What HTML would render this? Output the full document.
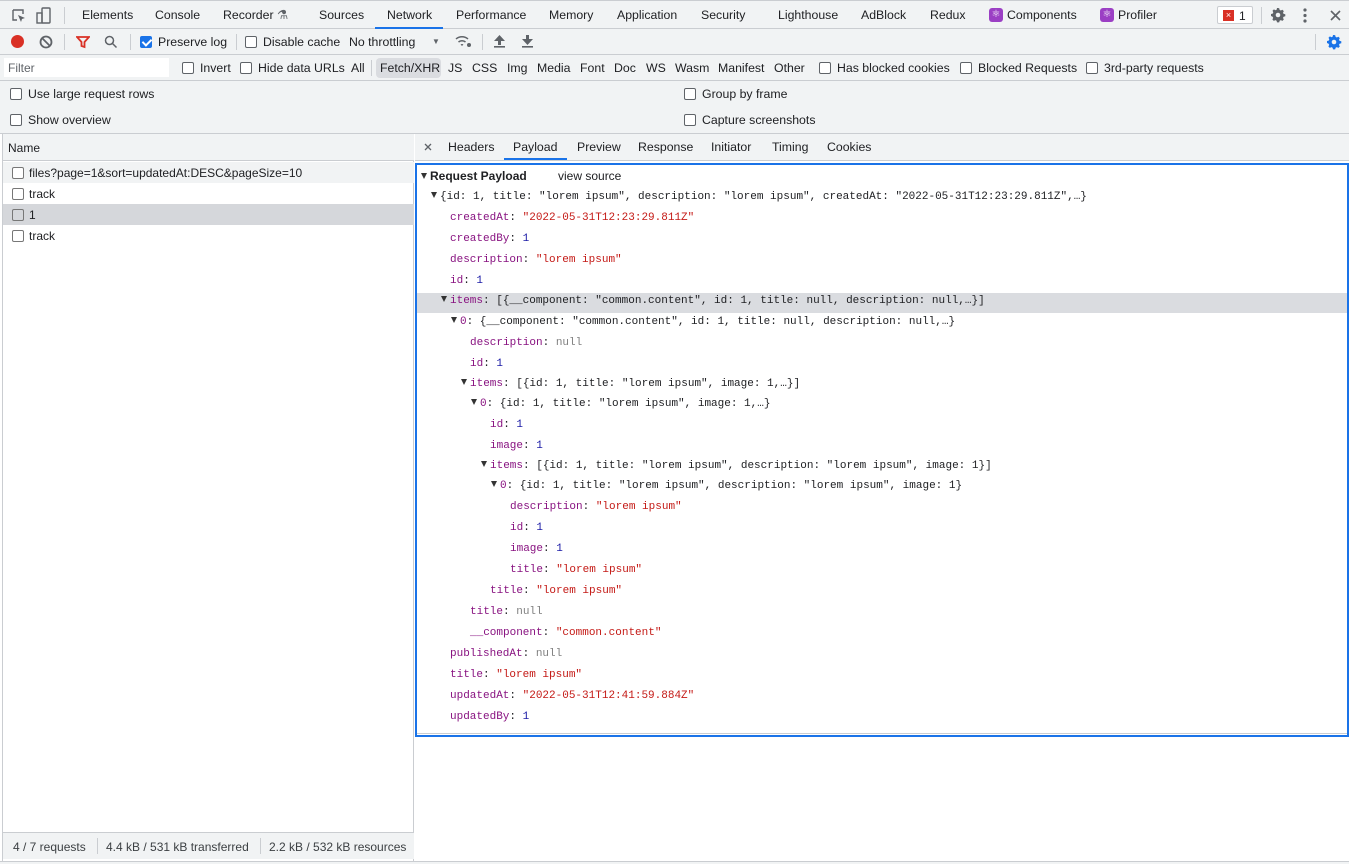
<!DOCTYPE html>
<html><head><meta charset="utf-8"><style>
*{box-sizing:border-box;margin:0;padding:0}
body{width:1349px;height:864px;overflow:hidden;background:#fff;font-family:"Liberation Sans",Arial,sans-serif;font-size:12px;color:#202124;position:relative}
.a{position:absolute;white-space:nowrap}
.bar{position:absolute;left:0;width:1349px;background:#f1f3f4;border-bottom:1px solid #cacdd1}
.cb{display:inline-block;width:12px;height:12px;border:1px solid #5f6368;border-radius:2px;vertical-align:top;background:#fff}
.cbc{background:#1a73e8;border-color:#1a73e8;position:relative}
.cbc:after{content:"";position:absolute;left:3px;top:0px;width:4px;height:7px;border:solid #fff;border-width:0 2px 2px 0;transform:rotate(45deg)}
.mono{font-family:"Liberation Mono",monospace;font-size:11px}
.k{color:#881280}.s{color:#c41a16}.n{color:#1a1aa6}.nl{color:#808080}
.tri{display:inline-block;width:0;height:0;border-left:3.5px solid transparent;border-right:3.5px solid transparent;border-top:6px solid #333;margin-right:3px;vertical-align:1px}
.sep{position:absolute;width:1px;background:#cacdd1}
.t{font-size:12.3px}
</style></head><body>
<svg width="0" height="0" style="position:absolute"><defs><g id="gear"><path d="M8 1l1.2.2.4 1.7 1.2.6 1.6-.8 1.4 1.4-.8 1.6.6 1.2 1.7.4v2l-1.7.4-.6 1.2.8 1.6-1.4 1.4-1.6-.8-1.2.6-.4 1.7H7l-.4-1.7-1.2-.6-1.6.8-1.4-1.4.8-1.6-.6-1.2L1 9V7l1.7-.4.6-1.2-.8-1.6 1.4-1.4 1.6.8 1.2-.6L7 1z"/></g></defs></svg>
<!-- top tab bar -->
<div class="bar" style="top:0;height:29px;border-top:1px solid #cacdd1">
<svg class="a" style="left:11px;top:7px" width="16" height="16" viewBox="0 0 16 16"><path d="M2 2h10v4M2 2v10h4" fill="none" stroke="#5f6368" stroke-width="1.4"/><path d="M7 7l7 3-3 1-1 3z" fill="#5f6368"/></svg>
<svg class="a" style="left:36px;top:6px" width="16" height="18" viewBox="0 0 16 18"><rect x="6" y="1" width="8" height="15" rx="1" fill="none" stroke="#5f6368" stroke-width="1.4"/><rect x="1" y="6" width="5" height="10" fill="none" stroke="#5f6368" stroke-width="1.4"/></svg>
<div class="sep" style="left:64px;top:6px;height:17px"></div>
<span class="a t" style="left:82px;top:7px">Elements</span>
<span class="a t" style="left:155px;top:7px">Console</span>
<span class="a t" style="left:223px;top:7px">Recorder <span style="color:#5f6368">⚗</span></span>
<span class="a t" style="left:319px;top:7px">Sources</span>
<span class="a t" style="left:387px;top:7px">Network</span>
<div class="a" style="left:375px;top:26px;width:68px;height:2px;background:#1a73e8"></div>
<span class="a t" style="left:456px;top:7px">Performance</span>
<span class="a t" style="left:549px;top:7px">Memory</span>
<span class="a t" style="left:617px;top:7px">Application</span>
<span class="a t" style="left:701px;top:7px">Security</span>
<span class="a t" style="left:778px;top:7px">Lighthouse</span>
<span class="a t" style="left:861px;top:7px">AdBlock</span>
<span class="a t" style="left:930px;top:7px">Redux</span>
<span class="a" style="left:989px;top:7px;width:14px;height:14px;background:#9b3fc4;border-radius:3px;color:#fff;font-size:10px;text-align:center;line-height:14px">⚛</span>
<span class="a t" style="left:1007px;top:7px">Components</span>
<span class="a" style="left:1100px;top:7px;width:14px;height:14px;background:#9b3fc4;border-radius:3px;color:#fff;font-size:10px;text-align:center;line-height:14px">⚛</span>
<span class="a t" style="left:1118px;top:7px">Profiler</span>
<div class="a" style="left:1217px;top:5px;width:36px;height:18px;border:1px solid #cacdd1;border-radius:2px;background:#fff"><span class="a" style="left:5px;top:3px;width:11px;height:11px;background:#d93025;color:#fff;font-size:9px;line-height:11px;text-align:center">×</span><span class="a" style="left:21px;top:2px">1</span></div>
<div class="sep" style="left:1261px;top:6px;height:17px"></div>
<svg class="a" style="left:1270px;top:6px" width="16" height="16" viewBox="0 0 16 16" fill="#5f6368"><use href="#gear"/><circle cx="8" cy="8" r="2.3" fill="#f1f3f4"/></svg>
<svg class="a" style="left:1303px;top:7px" width="4" height="15" viewBox="0 0 4 15" fill="#5f6368"><circle cx="2" cy="2" r="1.6"/><circle cx="2" cy="7.5" r="1.6"/><circle cx="2" cy="13" r="1.6"/></svg>
<svg class="a" style="left:1330px;top:9px" width="11" height="11" viewBox="0 0 11 11"><path d="M1 1l9 9M10 1l-9 9" stroke="#5f6368" stroke-width="1.6"/></svg>
</div>
<!-- toolbar -->
<div class="bar" style="top:29px;height:26px">
<span class="a" style="left:11px;top:6px;width:13px;height:13px;border-radius:50%;background:#d93025"></span>
<svg class="a" style="left:39px;top:6px" width="14" height="14" viewBox="0 0 14 14"><circle cx="7" cy="7" r="5.5" fill="none" stroke="#5f6368" stroke-width="1.8"/><path d="M3 3l8 8" stroke="#5f6368" stroke-width="1.8"/></svg>
<div class="sep" style="left:64px;top:5px;height:16px"></div>
<svg class="a" style="left:76px;top:6px" width="14" height="14" viewBox="0 0 14 14"><path d="M1 2h12l-4.5 5v5l-3-1V7z" fill="none" stroke="#d93025" stroke-width="1.8"/></svg>
<svg class="a" style="left:104px;top:6px" width="14" height="14" viewBox="0 0 14 14"><circle cx="5.5" cy="5.5" r="4" fill="none" stroke="#5f6368" stroke-width="1.5"/><path d="M8.5 8.5l4 4" stroke="#5f6368" stroke-width="1.5"/></svg>
<div class="sep" style="left:130px;top:5px;height:16px"></div>
<span class="a" style="left:140px;top:7px"><span class="cb cbc"></span></span>
<span class="a t" style="left:158px;top:6px">Preserve log</span>
<div class="sep" style="left:236px;top:5px;height:16px"></div>
<span class="a" style="left:245px;top:7px"><span class="cb"></span></span>
<span class="a t" style="left:263px;top:6px">Disable cache</span>
<span class="a t" style="left:349px;top:6px">No throttling</span>
<span class="a" style="left:432px;top:8px;font-size:8px;color:#5f6368">▼</span>
<svg class="a" style="left:455px;top:6px" width="18" height="14" viewBox="0 0 18 14" fill="none" stroke="#5f6368" stroke-width="1.5"><path d="M1 4a9 9 0 0 1 12 0M3.5 7a5.5 5.5 0 0 1 7 0M6 10a2 2 0 0 1 2 0"/><circle cx="14" cy="10" r="2" fill="#5f6368" stroke="none"/></svg>
<div class="sep" style="left:482px;top:5px;height:16px"></div>
<svg class="a" style="left:494px;top:6px" width="11" height="13" viewBox="0 0 11 13" fill="#5f6368"><path d="M5.5 0L11 6H7v4H4V6H0z"/><rect x="0" y="11" width="11" height="1.6"/></svg>
<svg class="a" style="left:522px;top:6px" width="11" height="13" viewBox="0 0 11 13" fill="#5f6368"><path d="M5.5 10L11 4H7V0H4v4H0z"/><rect x="0" y="11" width="11" height="1.6"/></svg>
<div class="sep" style="left:1315px;top:5px;height:16px"></div>
<svg class="a" style="left:1326px;top:5px" width="16" height="16" viewBox="0 0 16 16" fill="#1a73e8"><use href="#gear"/><circle cx="8" cy="8" r="2.3" fill="#f1f3f4"/></svg>
</div>
<!-- filter row -->
<div class="bar" style="top:55px;height:26px">
<div class="a" style="left:4px;top:3px;width:165px;height:19px;background:#fff"><span class="a" style="left:4px;top:3px;color:#5f6368">Filter</span></div>
<span class="a" style="left:182px;top:7px"><span class="cb"></span></span><span class="a t" style="left:200px;top:6px">Invert</span>
<span class="a" style="left:240px;top:7px"><span class="cb"></span></span><span class="a t" style="left:258px;top:6px">Hide data URLs</span>
<span class="a t" style="left:351px;top:6px">All</span>
<div class="sep" style="left:371px;top:5px;height:16px"></div>
<div class="a" style="left:376px;top:3px;width:65px;height:20px;background:#dadce0;border-radius:4px"></div>
<span class="a t" style="left:380px;top:6px">Fetch/XHR</span>
<span class="a t" style="left:448px;top:6px">JS</span>
<span class="a t" style="left:472px;top:6px">CSS</span>
<span class="a t" style="left:507px;top:6px">Img</span>
<span class="a t" style="left:537px;top:6px">Media</span>
<span class="a t" style="left:580px;top:6px">Font</span>
<span class="a t" style="left:614px;top:6px">Doc</span>
<span class="a t" style="left:646px;top:6px">WS</span>
<span class="a t" style="left:675px;top:6px">Wasm</span>
<span class="a t" style="left:718px;top:6px">Manifest</span>
<span class="a t" style="left:774px;top:6px">Other</span>
<span class="a" style="left:819px;top:7px"><span class="cb"></span></span><span class="a t" style="left:837px;top:6px">Has blocked cookies</span>
<span class="a" style="left:960px;top:7px"><span class="cb"></span></span><span class="a t" style="left:978px;top:6px">Blocked Requests</span>
<span class="a" style="left:1086px;top:7px"><span class="cb"></span></span><span class="a t" style="left:1104px;top:6px">3rd-party requests</span>
</div>
<!-- settings rows -->
<div class="bar" style="top:81px;height:53px">
<span class="a" style="left:10px;top:7px"><span class="cb"></span></span><span class="a t" style="left:28px;top:6px">Use large request rows</span>
<span class="a" style="left:10px;top:33px"><span class="cb"></span></span><span class="a t" style="left:28px;top:32px">Show overview</span>
<span class="a" style="left:684px;top:7px"><span class="cb"></span></span><span class="a t" style="left:702px;top:6px">Group by frame</span>
<span class="a" style="left:684px;top:33px"><span class="cb"></span></span><span class="a t" style="left:702px;top:32px">Capture screenshots</span>
</div>
<!-- left panel -->
<div class="a" style="left:2px;top:134px;width:412px;height:727px;border-left:1px solid #cacdd1;border-right:1px solid #cacdd1;background:#fff">
<div class="a" style="left:0;top:0;width:411px;height:27px;background:#f1f3f4;border-bottom:1px solid #cacdd1"><span class="a" style="left:5px;top:7px">Name</span></div>
<div class="a" style="left:0;top:28px;width:411px;height:21px;background:#f1f3f4"></div>
<div class="a" style="left:0;top:70px;width:411px;height:21px;background:#d5d7db"></div>
<span class="a" style="left:9px;top:33px"><span class="cb" style="border-color:#777"></span></span><span class="a" style="left:26px;top:32px">files?page=1&amp;sort=updatedAt:DESC&amp;pageSize=10</span>
<span class="a" style="left:9px;top:54px"><span class="cb" style="border-color:#777"></span></span><span class="a" style="left:26px;top:53px">track</span>
<span class="a" style="left:9px;top:75px"><span class="cb" style="border-color:#777;background:transparent"></span></span><span class="a" style="left:26px;top:74px">1</span>
<span class="a" style="left:9px;top:96px"><span class="cb" style="border-color:#777"></span></span><span class="a" style="left:26px;top:95px">track</span>
<div class="a" style="left:0;top:698px;width:411px;height:27px;background:#f1f3f4;border-top:1px solid #cacdd1">
<span class="a" style="left:10px;top:7px;color:#3c4043">4 / 7 requests</span>
<div class="sep" style="left:94px;top:5px;height:16px"></div>
<span class="a" style="left:103px;top:7px;color:#3c4043">4.4 kB / 531 kB transferred</span>
<div class="sep" style="left:257px;top:5px;height:16px"></div>
<span class="a" style="left:266px;top:7px;color:#3c4043">2.2 kB / 532 kB resources</span>
</div>
</div>
<div class="a" style="left:0;top:861px;width:1349px;height:3px;background:#f1f3f4;border-top:1px solid #cacdd1"></div>
<!-- right tabs -->
<div class="a" style="left:415px;top:134px;width:934px;height:27px;background:#f1f3f4;border-bottom:1px solid #cacdd1">
<svg class="a" style="left:9px;top:9px" width="8" height="8" viewBox="0 0 8 8"><path d="M1 1l6 6M7 1l-6 6" stroke="#5f6368" stroke-width="1.3"/></svg>
<span class="a t" style="left:33px;top:6px">Headers</span>
<span class="a t" style="left:98px;top:6px">Payload</span>
<div class="a" style="left:89px;top:24px;width:63px;height:2px;background:#1a73e8"></div>
<span class="a t" style="left:162px;top:6px">Preview</span>
<span class="a t" style="left:223px;top:6px">Response</span>
<span class="a t" style="left:296px;top:6px">Initiator</span>
<span class="a t" style="left:357px;top:6px">Timing</span>
<span class="a t" style="left:412px;top:6px">Cookies</span>
</div>
<!-- payload box -->
<div class="a" style="left:415px;top:163px;width:934px;height:574px;border:2px solid #1a73e8"></div>
<div class="a" style="left:417px;top:733px;width:930px;height:1px;background:#cacdd1"></div>
<div class="a" style="left:417px;top:293px;width:930px;height:20px;background:#dadce0"></div>
<span class="a" style="left:421px;top:169px;font-weight:bold"><span class="tri"></span>Request Payload</span>
<span class="a" style="left:558px;top:169px">view source</span>
<div class="mono">
<span class="a" style="left:431px;top:191px"><span class="tri"></span>{id: 1, title: "lorem ipsum", description: "lorem ipsum", createdAt: "2022-05-31T12:23:29.811Z",…}</span>
<span class="a" style="left:450px;top:212px"><span class="k">createdAt</span>: <span class="s">"2022-05-31T12:23:29.811Z"</span></span>
<span class="a" style="left:450px;top:233px"><span class="k">createdBy</span>: <span class="n">1</span></span>
<span class="a" style="left:450px;top:254px"><span class="k">description</span>: <span class="s">"lorem ipsum"</span></span>
<span class="a" style="left:450px;top:275px"><span class="k">id</span>: <span class="n">1</span></span>
<span class="a" style="left:441px;top:295px"><span class="tri"></span><span class="k">items</span>: [{__component: "common.content", id: 1, title: null, description: null,…}]</span>
<span class="a" style="left:451px;top:316px"><span class="tri"></span><span class="k">0</span>: {__component: "common.content", id: 1, title: null, description: null,…}</span>
<span class="a" style="left:470px;top:337px"><span class="k">description</span>: <span class="nl">null</span></span>
<span class="a" style="left:470px;top:358px"><span class="k">id</span>: <span class="n">1</span></span>
<span class="a" style="left:461px;top:378px"><span class="tri"></span><span class="k">items</span>: [{id: 1, title: "lorem ipsum", image: 1,…}]</span>
<span class="a" style="left:471px;top:398px"><span class="tri"></span><span class="k">0</span>: {id: 1, title: "lorem ipsum", image: 1,…}</span>
<span class="a" style="left:490px;top:419px"><span class="k">id</span>: <span class="n">1</span></span>
<span class="a" style="left:490px;top:440px"><span class="k">image</span>: <span class="n">1</span></span>
<span class="a" style="left:481px;top:460px"><span class="tri"></span><span class="k">items</span>: [{id: 1, title: "lorem ipsum", description: "lorem ipsum", image: 1}]</span>
<span class="a" style="left:491px;top:480px"><span class="tri"></span><span class="k">0</span>: {id: 1, title: "lorem ipsum", description: "lorem ipsum", image: 1}</span>
<span class="a" style="left:510px;top:501px"><span class="k">description</span>: <span class="s">"lorem ipsum"</span></span>
<span class="a" style="left:510px;top:522px"><span class="k">id</span>: <span class="n">1</span></span>
<span class="a" style="left:510px;top:543px"><span class="k">image</span>: <span class="n">1</span></span>
<span class="a" style="left:510px;top:564px"><span class="k">title</span>: <span class="s">"lorem ipsum"</span></span>
<span class="a" style="left:490px;top:585px"><span class="k">title</span>: <span class="s">"lorem ipsum"</span></span>
<span class="a" style="left:470px;top:606px"><span class="k">title</span>: <span class="nl">null</span></span>
<span class="a" style="left:470px;top:627px"><span class="k">__component</span>: <span class="s">"common.content"</span></span>
<span class="a" style="left:450px;top:648px"><span class="k">publishedAt</span>: <span class="nl">null</span></span>
<span class="a" style="left:450px;top:669px"><span class="k">title</span>: <span class="s">"lorem ipsum"</span></span>
<span class="a" style="left:450px;top:690px"><span class="k">updatedAt</span>: <span class="s">"2022-05-31T12:41:59.884Z"</span></span>
<span class="a" style="left:450px;top:711px"><span class="k">updatedBy</span>: <span class="n">1</span></span>
</div>
</body></html>
